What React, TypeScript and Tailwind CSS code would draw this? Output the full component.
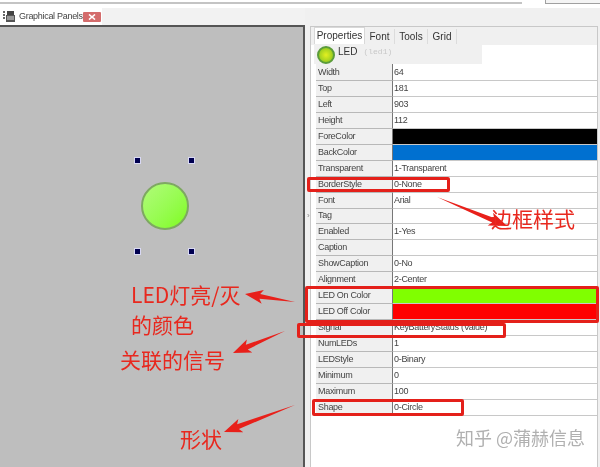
const rows: { label: string; value?: string; color?: string; h?: string }[] = [
  { label: 'Width', value: '64', h: 'h-[17px]' },
  { label: 'Top', value: '181' },
  { label: 'Left', value: '903' },
  { label: 'Height', value: '112' },
  { label: 'ForeColor', color: 'bg-black' },
  { label: 'BackColor', color: 'bg-[#0070d0]' },
  { label: 'Transparent', value: '1-Transparent' },
  { label: 'BorderStyle', value: '0-None' },
  { label: 'Font', value: 'Arial' },
  { label: 'Tag' },
  { label: 'Enabled', value: '1-Yes' },
  { label: 'Caption' },
  { label: 'ShowCaption', value: '0-No' },
  { label: 'Alignment', value: '2-Center' },
  { label: 'LED On Color', color: 'bg-[#80ff00]' },
  { label: 'LED Off Color', color: 'bg-[#ff0000]' },
  { label: 'Signal', value: 'KeyBatteryStatus (Value)' },
  { label: 'NumLEDs', value: '1' },
  { label: 'LEDStyle', value: '0-Binary' },
  { label: 'Minimum', value: '0' },
  { label: 'Maximum', value: '100' },
  { label: 'Shape', value: '0-Circle' },
];

// tapered annotation arrow, thin at the tail and barbed at the head
function arrowPoints(x1: number, y1: number, x2: number, y2: number) {
  const len = Math.hypot(x2 - x1, y2 - y1);
  const ux = (x2 - x1) / len;
  const uy = (y2 - y1) / len;
  const nx = -uy;
  const ny = ux;
  const neckX = x2 - ux * 15;
  const neckY = y2 - uy * 15;
  const pts = [
    [x1, y1],
    [neckX + nx * 2.5, neckY + ny * 2.5],
    [neckX - ux * 3 + nx * 7, neckY - uy * 3 + ny * 7],
    [x2, y2],
    [neckX - ux * 3 - nx * 7, neckY - uy * 3 - ny * 7],
    [neckX - nx * 2.5, neckY - ny * 2.5],
  ];
  return pts.map((p) => p.join(',')).join(' ');
}

function Handle({ className }: { className: string }) {
  return (
    <div className={`absolute w-[7px] h-[7px] bg-[#000050] border border-[#d8d8f4] ${className}`} />
  );
}

function Tab({ label, className }: { label: string; className: string }) {
  return <div className={`flex items-center justify-center ${className}`}>{label}</div>;
}

export default function App() {
  return (
    <div className="relative w-[600px] h-[467px] overflow-hidden bg-[#f0f0f0] flex flex-col blur-[0.4px] font-['Liberation_Sans',sans-serif] text-[#3c3c3c]">
      {/* Window top edge */}
      <div className="h-[8px] shrink-0 flex items-start bg-white">
        <div className="w-[522px] h-[4px] border-b-2 border-[#c4c4c4]" />
        <div className="w-[23px] h-[4px]" />
        <div className="flex-1 h-[4px] bg-[#f4f4f4] border-l border-b border-[#a0a0a0]" />
      </div>

      <div className="flex-1 flex min-h-0">
        {/* Graphical panel side */}
        <div className="w-[305px] shrink-0 flex flex-col">
          <div className="h-[19px] shrink-0 flex bg-[#f2f2f2] border-b-2 border-[#555]">
            <div className="w-[102px] bg-white flex items-center pl-[3px] text-[9px]">
              <svg width="12" height="13" viewBox="0 0 12 13" className="shrink-0">
                <rect x="4" y="1" width="7" height="4" fill="#444" />
                <rect x="3" y="5" width="9" height="7" fill="#555" />
                <path d="M4 7h7M4 9h7" stroke="#ddd" strokeWidth="1" />
                <path d="M0 2h2M0 5h2M0 8h2" stroke="#333" strokeWidth="1.4" />
              </svg>
              <span className="ml-[4px] w-[64px] shrink-0 whitespace-nowrap tracking-[-0.3px] text-[#444]">Graphical Panels</span>
              <div className="w-[18px] h-[10px] shrink-0 bg-[#d46c6c] rounded-[1px] flex items-center justify-center">
                <svg width="8" height="6" viewBox="0 0 8 6">
                  <path d="M1 0.5l6 5M7 0.5l-6 5" stroke="#fff" strokeWidth="1.6" />
                </svg>
              </div>
            </div>
          </div>

          {/* Canvas with the selected LED */}
          <div className="flex-1 bg-[#bebebe] border-r-2 border-[#555] flex items-start pt-[155px] pl-[141px]">
            <div className="relative w-[48px] h-[48px]">
              <div className="w-full h-full rounded-full border-2 border-[#7ea862] bg-linear-to-br from-[#b0fb78] to-[#7ffc0c]" />
              <Handle className="left-[-7px] top-[-25px]" />
              <Handle className="left-[47px] top-[-25px]" />
              <Handle className="left-[-7px] top-[66px]" />
              <Handle className="left-[47px] top-[66px]" />
            </div>
          </div>
        </div>

        {/* Properties side */}
        <div className="flex-1 flex flex-col min-w-0">
          <div className="h-[18px] shrink-0" />
          <div className="flex-1 flex ml-[5px] mr-[2px] border-l border-r border-t border-[#c8c8c8] bg-white">
            <div className="flex-1 min-w-0 pl-[5px] text-[9px] leading-none tracking-[-0.3px]">
              <div className="flex h-[18px] items-start bg-[#f0f0f0] -ml-[5px] pl-[3px] text-[10px] tracking-normal text-[#333]">
                <Tab label="Properties" className="w-[51px] h-[17px] bg-white border-t border-x border-[#d8d8d8]" />
                <Tab label="Font" className="w-[30px] h-[15px] mt-[2px] border-r border-[#dcdcdc]" />
                <Tab label="Tools" className="w-[33px] h-[15px] mt-[2px] border-r border-[#dcdcdc]" />
                <Tab label="Grid" className="w-[29px] h-[15px] mt-[2px] border-r border-[#dcdcdc]" />
              </div>

              <div className="h-[19px] w-[168px] -ml-[2px] bg-[#f0f0f0] flex items-start text-[10px] tracking-normal">
                <div className="w-[18px] h-[18px] mt-[1px] ml-[3px] rounded-full border-2 border-[#5c9c3c] bg-radial from-[#e4f020] to-[#7cc020]" />
                <span className="ml-[3px] mt-[2px] text-[#333]">LED</span>
                <span className="ml-[6px] mt-[3px] font-['Liberation_Mono',monospace] text-[#c8c8c8] text-[8px]">(led1)</span>
              </div>

              {rows.map((row) => (
                <div key={row.label} className={`flex ${row.h ?? 'h-[15.95px]'}`}>
                  <div className="w-[76px] shrink-0 bg-[#f0f0f0] border-b border-[#b8b8b8] flex items-center pl-[2px] whitespace-nowrap text-[#444]">
                    {row.label}
                  </div>
                  <div className="flex-1 min-w-0 flex border-l border-[#777] border-b border-b-[#c8c8c8]">
                    <div className={`flex-1 flex items-center pl-px whitespace-nowrap text-[#444] ${row.color ?? ''}`}>
                      {row.value}
                    </div>
                  </div>
                </div>
              ))}
            </div>
          </div>
        </div>
      </div>

      {/* Splitter grip */}
      <div className="absolute left-[307px] top-[211px] text-[8px] leading-[10px] text-[#888]">›</div>

      {/* Red annotations drawn over the screenshot */}
      <div className="absolute left-[307px] top-[177px] w-[143px] h-[15px] border-[3px] border-[#e4201a] rounded-[2px]" />
      <div className="absolute left-[305px] top-[286px] w-[294px] h-[37px] border-[3px] border-[#e4201a] rounded-[2px]" />
      <div className="absolute left-[297px] top-[323px] w-[209px] h-[15px] border-[3px] border-[#e4201a] rounded-[2px]" />
      <div className="absolute left-[312px] top-[399px] w-[152px] h-[17px] border-[3px] border-[#e4201a] rounded-[2px]" />

      <svg className="absolute inset-0 pointer-events-none" width="600" height="467" viewBox="0 0 600 467">
        <polygon points={arrowPoints(437, 197, 507, 226)} fill="#e8201a" />
        <polygon points={arrowPoints(295, 302, 245, 294)} fill="#e8201a" />
        <polygon points={arrowPoints(285, 331, 233, 353)} fill="#e8201a" />
        <polygon points={arrowPoints(295, 405, 224, 432)} fill="#e8201a" />
      </svg>

      <div className="absolute left-[491px] top-[203px] text-[21px] leading-[30px] whitespace-nowrap text-[#e8281e] font-['Noto_Sans_CJK_SC',sans-serif]">
        边框样式
      </div>
      <div className="absolute left-[131px] top-[279px] w-[125px] text-[21px] leading-[30px] whitespace-nowrap text-[#e8281e] font-['Noto_Sans_CJK_SC',sans-serif]">
        <div>LED灯亮/灭</div>
        <div>的颜色</div>
      </div>
      <div className="absolute left-[120px] top-[344px] text-[21px] leading-[30px] whitespace-nowrap text-[#e8281e] font-['Noto_Sans_CJK_SC',sans-serif]">
        关联的信号
      </div>
      <div className="absolute left-[180px] top-[423px] text-[21px] leading-[30px] whitespace-nowrap text-[#e8281e] font-['Noto_Sans_CJK_SC',sans-serif]">
        形状
      </div>

      {/* Watermark */}
      <div className="absolute left-[456px] top-[425px] text-[18px] leading-[24px] whitespace-nowrap text-[#b0b0b0] font-['Noto_Sans_CJK_SC',sans-serif]">
        知乎 @蒲赫信息
      </div>
    </div>
  );
}
